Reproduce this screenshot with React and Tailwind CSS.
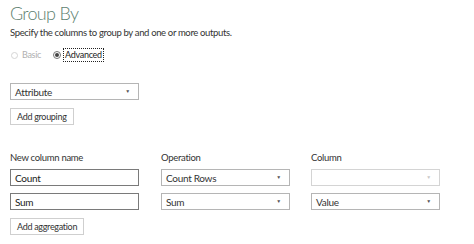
import React from "react";

const FONT = { fontFamily: 'Lato, "Open Sans", "Liberation Sans", sans-serif' };

function Select({ value, disabled, className = "" }) {
  return (
    <div
      className={`w-[129px] h-[17px] border flex items-center justify-between pl-[4px] pr-[8px] text-[10px] leading-none ${
        disabled ? "border-[#d4d4d4] bg-white" : "border-[#b5b5b5] text-[#333]"
      } ${className}`}
    >
      <span>{value}</span>
      <span className={`text-[5px] ${disabled ? "text-[#c8c8c8]" : "text-[#555]"}`}>▼</span>
    </div>
  );
}

function TextBox({ value }) {
  return (
    <div className="w-[129px] h-[17px] border border-[#7a7a7a] flex items-center pl-[4px] text-[10px] text-[#222] leading-none">
      {value}
    </div>
  );
}

function Button({ children, className = "" }) {
  return (
    <div
      className={`h-[17px] border border-[#cfcfcf] bg-white flex items-center px-[6px] text-[9px] text-[#333] leading-none w-fit ${className}`}
    >
      {children}
    </div>
  );
}

export default function App() {
  return (
    <div
      className="w-[474px] h-[244px] bg-white pl-[10px] pt-[1px] overflow-hidden tracking-[-0.3px]"
      style={FONT}
    >
      <h1 className="text-[18px] font-light text-[#5e7f70] leading-[24px] tracking-[-0.7px]">Group By</h1>
      <p className="text-[9.5px] text-[#333] mt-[2px] leading-[12px] tracking-[-0.35px]">
        Specify the columns to group by and one or more outputs.
      </p>

      <div className="flex items-center mt-[9px] text-[9px] h-[14px]">
        <span className="ml-[1px] w-[7px] h-[7px] rounded-full border border-[#d5d5d5] mr-[4px]" />
        <span className="text-[#b0b0b0]">Basic</span>
        <span className="ml-[12px] w-[8px] h-[8px] rounded-full border border-[#777] flex items-center justify-center mr-[2px]">
          <span className="w-[4px] h-[4px] rounded-full bg-[#444]" />
        </span>
        <span className="border border-dotted border-[#222] px-[1px] text-[#222] leading-[12px]">Advanced</span>
      </div>

      <Select value="Attribute" className="mt-[21px]" />
      <Button className="mt-[8px]">Add grouping</Button>

      <div className="grid grid-cols-[151px_150px_129px] mt-[27px] text-[9.5px] text-[#333]">
        <span className="leading-[12px]">New column name</span>
        <span className="leading-[12px]">Operation</span>
        <span className="leading-[12px]">Column</span>
      </div>

      <div className="grid grid-cols-[151px_150px_129px] mt-[5px] gap-y-[7px]">
        <TextBox value="Count" />
        <Select value="Count Rows" />
        <Select value="" disabled />
        <TextBox value="Sum" />
        <Select value="Sum" />
        <Select value="Value" />
      </div>

      <Button className="mt-[8px]">Add aggregation</Button>
    </div>
  );
}
